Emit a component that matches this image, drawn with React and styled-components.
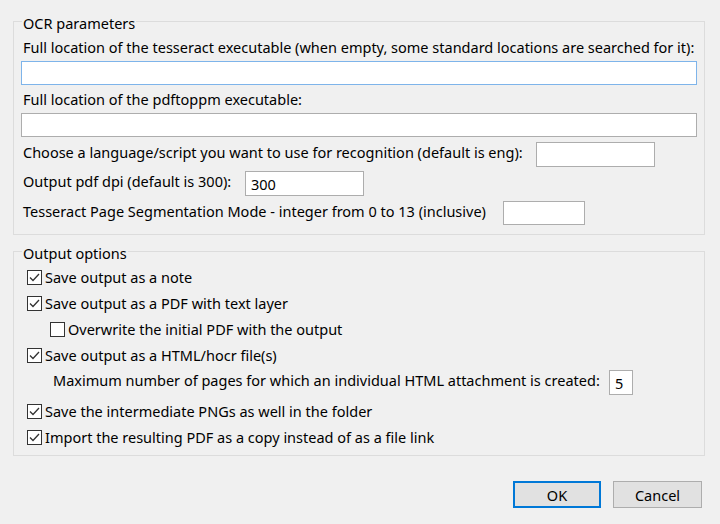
import React from 'react'
import styled, { createGlobalStyle } from 'styled-components'

const GlobalStyle = createGlobalStyle`
    html, body {
        margin: 0;
        padding: 0;
        background: #f0f0f0;
    }
    body {
        font-family: "Noto Sans", "Open Sans", sans-serif;
        font-size: 14.5px;
        color: #000;
    }
`

const Dialog = styled.div`
    width: 720px;
    height: 524px;
    box-sizing: border-box;
    padding: 9px 15px 0 13px;
    display: flex;
    flex-direction: column;
`

const Group = styled.fieldset`
    margin: ${props => props.gap || 0}px 0 0 0;
    padding: 0 7px ${props => props.bottom}px 7px;
    border: 1px solid #dcdcdc;
    min-width: 0;
    display: flex;
    flex-direction: column;
`

const GroupTitle = styled.legend`
    padding: 4px 1px 0 1px;
    margin-left: 1px;
    line-height: 20px;
`

const Label = styled.div`
    line-height: 20px;
    padding-left: 2px;
    margin-top: ${props => props.top || 0}px;
    white-space: nowrap;
`

const TextInput = styled.input`
    box-sizing: border-box;
    height: ${props => props.h || 24}px;
    width: ${props => props.w ? props.w + 'px' : '100%'};
    margin: ${props => props.top || 0}px 0 0 0;
    padding: 0 5px;
    border: 1px solid ${props => props.focused ? '#7eb4ea' : '#adadad'};
    background: #fff;
    font: inherit;
    outline: none;
    flex: none;
`

const FieldRow = styled.div`
    display: flex;
    align-items: flex-start;
    margin-top: ${props => props.top}px;
`

const RowLabel = styled.div`
    width: ${props => props.w}px;
    flex: none;
    line-height: 20px;
    padding-left: 2px;
    box-sizing: border-box;
    white-space: nowrap;
`

const CheckRow = styled.label`
    display: flex;
    align-items: center;
    height: 26px;
    padding-left: ${props => props.indent ? 29 : 6}px;
    white-space: nowrap;
`

const Box = styled.span`
    width: 15px;
    height: 15px;
    box-sizing: border-box;
    border: 1px solid #333;
    background: #fff;
    margin-right: 3px;
    flex: none;
    display: flex;
    align-items: center;
    justify-content: center;
`

const OptionList = styled.div`
    display: flex;
    flex-direction: column;
    padding-top: 1px;
`

const LimitRow = styled.div`
    display: flex;
    align-items: flex-start;
    padding: 2px 0 3px 32px;
    white-space: nowrap;
`

const LimitLabel = styled.span`
    line-height: 20px;
    width: 556px;
    flex: none;
`

const Buttons = styled.div`
    display: flex;
    justify-content: flex-end;
    gap: 12px;
    margin-top: 25px;
    padding-right: 3px;
`

const Button = styled.button`
    width: ${props => props.w}px;
    height: 27px;
    box-sizing: border-box;
    background: #e1e1e1;
    border: ${props => props.primary ? '2px solid #0078d7' : '1px solid #adadad'};
    font: inherit;
    color: #000;
    padding: 0;
`

const Check = ({ checked }) => (
    <Box>
        {checked && (
            <svg width="11" height="11" viewBox="0 0 11 11">
                <path d="M1 5.5 L4 8.5 L10 2" fill="none" stroke="#333" strokeWidth="1.3" />
            </svg>
        )}
    </Box>
)

const Option = ({ checked, indent, children }) => (
    <CheckRow indent={indent}>
        <Check checked={checked} />
        {children}
    </CheckRow>
)

const App = () => (
    <Dialog>
        <GlobalStyle />
        <Group bottom={9}>
            <GroupTitle>OCR parameters</GroupTitle>
            <Label top={4}>Full location of the tesseract executable (when empty, some standard locations are searched for it):</Label>
            <TextInput top={4} focused />
            <Label top={4}>Full location of the pdftoppm executable:</Label>
            <TextInput top={4} />
            <FieldRow top={5}>
                <RowLabel w={515}>Choose a language/script you want to use for recognition (default is eng):</RowLabel>
                <TextInput h={25} w={119} />
            </FieldRow>
            <FieldRow top={4}>
                <RowLabel w={224}>Output pdf dpi (default is 300):</RowLabel>
                <TextInput h={25} w={119} defaultValue="300" />
            </FieldRow>
            <FieldRow top={5}>
                <RowLabel w={482}>Tesseract Page Segmentation Mode - integer from 0 to 13 (inclusive)</RowLabel>
                <TextInput w={82} />
            </FieldRow>
        </Group>
        <Group gap={4} bottom={5}>
            <GroupTitle>Output options</GroupTitle>
            <OptionList>
                <Option checked>Save output as a note</Option>
                <Option checked>Save output as a PDF with text layer</Option>
                <Option indent>Overwrite the initial PDF with the output</Option>
                <Option checked>Save output as a HTML/hocr file(s)</Option>
                <LimitRow>
                    <LimitLabel>Maximum number of pages for which an individual HTML attachment is created:</LimitLabel>
                    <TextInput h={25} w={24} defaultValue="5" />
                </LimitRow>
                <Option checked>Save the intermediate PNGs as well in the folder</Option>
                <Option checked>Import the resulting PDF as a copy instead of as a file link</Option>
            </OptionList>
        </Group>
        <Buttons>
            <Button primary w={88}>OK</Button>
            <Button w={89}>Cancel</Button>
        </Buttons>
    </Dialog>
)

export default App
